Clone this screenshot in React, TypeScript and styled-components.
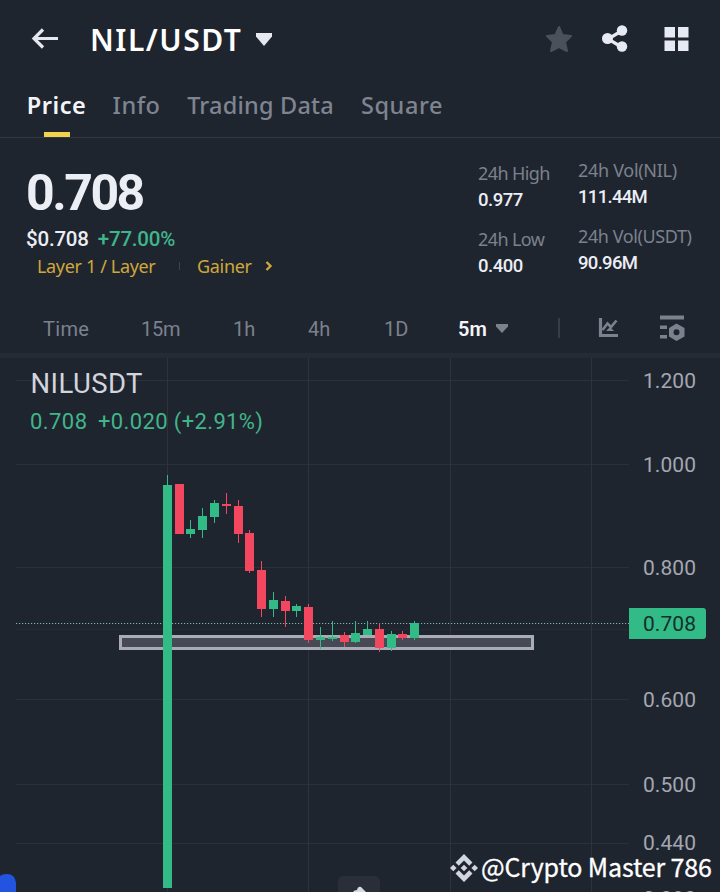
import React from "react";
import styled, { createGlobalStyle } from "styled-components";

const PageStyle = createGlobalStyle`
  * { box-sizing: border-box; }
  body { margin: 0; background: #1f252f; }
`;

const Screen = styled.main`
  width: 720px;
  height: 892px;
  display: flex;
  flex-direction: column;
  overflow: hidden;
  background: #1f252f;
  color: #eceef5;
  font-family: "Noto Sans", "Open Sans", sans-serif;
`;

const Header = styled.header`
  height: 78px;
  display: flex;
  align-items: center;
  padding: 0 31px;
`;

const Pair = styled.h1`
  margin: 2px 14px 0 31px;
  width: 152px;
  font-size: 30px;
  line-height: 40px;
  font-weight: 600;
  letter-spacing: 1.5px;
  color: #fff;
  white-space: nowrap;
`;

const Actions = styled.div`
  margin-left: auto;
  display: flex;
  align-items: center;
  gap: 28px;
`;

const GridButton = styled.span`
  display: flex;
  margin-left: 7px;
`;

const Tabs = styled.nav`
  height: 60px;
  display: flex;
  gap: 27px;
  padding-left: 27px;
  border-bottom: 1px solid #323843;
`;

const Tab = styled.div<{ $width: number; $active?: boolean; $spacing?: number }>`
  width: ${(p) => p.$width}px;
  display: flex;
  flex-direction: column;
  align-items: center;
  justify-content: space-between;
  padding-top: 10px;
  font-size: 23.5px;
  line-height: 34px;
  font-weight: ${(p) => (p.$active ? 600 : 500)};
  letter-spacing: ${(p) => p.$spacing ?? 0}px;
  color: ${(p) => (p.$active ? "#f3f4f8" : "#7e8490")};
  white-space: nowrap;
`;

const TabMark = styled.span`
  width: 26px;
  height: 5px;
  background: #f2d34f;
`;

const Summary = styled.section`
  height: 165px;
  display: flex;
`;

const PriceBlock = styled.div`
  width: 478px;
  padding: 28px 0 0 26px;
`;

const LastPrice = styled.div`
  font: 700 50px/54px Roboto, sans-serif;
  letter-spacing: -2.5px;
`;

const ChangeRow = styled.div`
  display: flex;
  gap: 9px;
  margin-top: 5px;
  font: 500 20.5px/28px Roboto, sans-serif;
  letter-spacing: -0.2px;
`;

const Gain = styled.span`
  color: #3fb68a;
`;

const TagRow = styled.div`
  display: flex;
  align-items: center;
  padding-left: 11px;
  height: 25px;
  font-size: 18px;
  color: #cfa83b;
  white-space: nowrap;
`;

const Tag = styled.span<{ $width: number; $spacing: number }>`
  width: ${(p) => p.$width}px;
  letter-spacing: ${(p) => p.$spacing}px;
`;

const TagDivider = styled.span`
  width: 1px;
  height: 8px;
  margin: 0 17px 0 23px;
  background: #3d424c;
`;

const StatColumn = styled.div<{ $width: number; $top: number }>`
  width: ${(p) => p.$width}px;
  padding-top: ${(p) => p.$top}px;
  display: flex;
  flex-direction: column;
  gap: 14px;
`;

const Stat = styled.div`
  height: 52px;
`;

const StatLabel = styled.div<{ $spacing?: number }>`
  font-size: 18px;
  line-height: 26px;
  letter-spacing: ${(p) => p.$spacing ?? -0.4}px;
  color: #7b818d;
  white-space: nowrap;
`;

const StatValue = styled.div<{ $spacing?: number }>`
  font: 500 18.5px/28px Roboto, sans-serif;
  letter-spacing: ${(p) => p.$spacing ?? -0.5}px;
`;

const Intervals = styled.nav`
  height: 50px;
  display: flex;
  align-items: center;
  padding-left: 43px;
  font: 400 20px/28px Roboto, sans-serif;
  color: #7b818d;
`;

const Interval = styled.span<{ $slot: number; $active?: boolean; $spacing?: number }>`
  width: ${(p) => p.$slot}px;
  padding-top: 1px;
  letter-spacing: ${(p) => p.$spacing ?? 0}px;
  font-weight: ${(p) => (p.$active ? 600 : 400)};
  color: ${(p) => (p.$active ? "#f3f4f8" : "inherit")};
`;

const IntervalDivider = styled.span`
  width: 2px;
  height: 20px;
  margin: 0 38px 0 50px;
  background: #383d48;
`;

const ToolGap = styled.span`
  width: 42px;
`;

const ChartArea = styled.section`
  height: 539px;
  border-top: 5px solid #252a34;
`;

const ChartSvg = styled.svg`
  display: block;
  font-family: Roboto, sans-serif;
`;

const GREEN = "#33bb87";
const RED = "#f2475f";

type Candle = [left: number, open: number, close: number, high: number, low: number, color: string];

const candles: Candle[] = [
  [163, 485, 888, 475, 888, GREEN],
  [175, 484, 534, 484, 534, RED],
  [186, 529, 534, 520, 538, GREEN],
  [198, 516, 530, 508, 538, GREEN],
  [210, 503, 517, 500, 523, GREEN],
  [222, 504, 506, 493, 514, RED],
  [234, 506, 534, 500, 543, RED],
  [245, 533, 571, 530, 573, RED],
  [257, 570, 609, 561, 617, RED],
  [269, 600, 609, 592, 617, GREEN],
  [281, 601, 611, 596, 627, RED],
  [292, 606, 611, 604, 617, GREEN],
  [304, 607, 640, 604, 643, RED],
  [316, 637, 640, 627, 649, GREEN],
  [328, 637, 639, 621, 641, GREEN],
  [340, 635, 642, 632, 647, RED],
  [351, 633, 642, 621, 643, GREEN],
  [363, 629, 635, 621, 635, GREEN],
  [375, 629, 648, 623, 652, RED],
  [387, 634, 648, 631, 651, GREEN],
  [398, 634, 638, 631, 640, RED],
  [410, 623, 638, 621, 640, GREEN],
];

const priceLevels: [string, number][] = [
  ["1.200", 380],
  ["1.000", 464],
  ["0.800", 567],
  ["0.600", 699],
  ["0.500", 784],
  ["0.440", 843],
  ["0.390", 898],
];

const timeLines = [167, 308, 450, 591];

function PriceChart() {
  return (
    <ChartSvg width="720" height="534" viewBox="0 358 720 534">
      {priceLevels.map(([label, y]) => (
        <rect key={label} x="16" y={y} width="613" height="1" fill="#2a303a" />
      ))}
      <rect x="16" y="629" width="613" height="1" fill="#252b35" />
      {timeLines.map((x) => (
        <rect key={x} x={x} y="358" width="1" height="534" fill="#2d323c" />
      ))}
      <rect x="120.5" y="636.5" width="412" height="12" fill="#474a54" stroke="#a9acb7" strokeWidth="3" />
      <line x1="16" x2="629" y1="623.5" y2="623.5" stroke="#7fb5a6" strokeDasharray="1.200 1.800" />
      {candles.map(([x, top, bottom, high, low, color]) => (
        <g key={x} fill={color}>
          <rect x={x + 4} y={high} width="1" height={low - high} />
          <rect x={x} y={top} width="9" height={bottom - top} />
        </g>
      ))}
      <text x="30.5" y="393" fontSize="27.5" fill="#d3d5dd" textLength="112">NILUSDT</text>
      <g fontSize="22" fill="#3fb68a">
        <text x="30" y="429" textLength="57">0.708</text>
        <text x="98" y="429" textLength="165">+0.020 (+2.91%)</text>
      </g>
      <g fontSize="21" fill="#a4a7b1">
        {priceLevels.map(([label, y]) => (
          <text key={label} x="643" y={y === 843 ? 850 : y + 8} textLength="53">{label}</text>
        ))}
      </g>
      <path d="M629 608h74a3 3 0 0 1 3 3v25a3 3 0 0 1-3 3h-74z" fill={GREEN} />
      <text x="643" y="631" fontSize="21" fill="#152f2b" textLength="53">0.708</text>

      <path d="M0 876q2-2 7-2 8 0 9 9v9H0z" fill="#2254e0" />
      <rect x="338" y="876" width="42" height="24" rx="5" fill="#292e38" />
      <path d="M353 892q1-2 4-2 1-4 4-3l5 5z" fill="#d8dae3" />

      <g transform="translate(464 868)" fill="#d3d6e0">
        <path d="M0-14 8.500-5.500 5.200-2.200 0-7.400-5.200-2.200-8.500-5.500z" />
        <path d="M0 14 8.500 5.500 5.200 2.200 0 7.400-5.200 2.200-8.500 5.500z" />
        <path d="M0-3.300 3.300 0 0 3.300-3.300 0z" />
        <path d="M-10.700-3.300-7.400 0-10.700 3.300-14 0z" />
        <path d="M10.700-3.300 14 0 10.700 3.300 7.400 0z" />
      </g>
      <text
        x="481"
        y="877"
        fontFamily='"Noto Sans CJK SC", sans-serif'
        fontSize="25"
        fontWeight="400"
        fill="#fff"
        stroke="#fff"
        strokeWidth="0.300"
        textLength="231"
      >
        @Crypto Master 786
      </text>
    </ChartSvg>
  );
}

function BackIcon() {
  return (
    <svg width="28" height="22" viewBox="0 0 28 22" fill="none" stroke="#e6e8ef" strokeWidth="3.200">
      <path d="M27 10.500H3M12 1.500l-9 9 9 9" />
    </svg>
  );
}

function CaretIcon({ width, height, color }: { width: number; height: number; color: string }) {
  return (
    <svg width={width} height={height} viewBox="0 0 16 13" preserveAspectRatio="none" fill={color}>
      <path d="M0 0h16v3.500L8 13 0 3.500z" />
    </svg>
  );
}

function StarIcon() {
  return (
    <svg width="28" height="28" viewBox="0 0 28 28" fill="#4b505b" stroke="#4b505b" strokeWidth="2" strokeLinejoin="round">
      <path d="m14 2 3.500 8 8.500 1-6 6 2 9-8-4-8 4 2-9-6-6 8.500-1z" />
    </svg>
  );
}

function ShareIcon() {
  return (
    <svg width="28" height="28" viewBox="0 0 28 28" fill="#e8eaf3" stroke="#e8eaf3">
      <path d="M20.500 6 7 14l13.500 8" fill="none" strokeWidth="3.200" />
      <circle cx="21" cy="5.500" r="5.200" stroke="none" />
      <circle cx="6.500" cy="13.500" r="5.500" stroke="none" />
      <circle cx="21" cy="21.500" r="5.200" stroke="none" />
    </svg>
  );
}

function GridIcon() {
  return (
    <svg width="25" height="25" viewBox="0 0 25 25" fill="#e8eaf3">
      <path d="M0.500 0H11v10.500H0.500zM14 0h10.500v10.500H14zM0.500 13.500H11V24H0.500zM14 13.500h10.500V24H14z" />
    </svg>
  );
}

function ChevronIcon() {
  return (
    <svg width="8" height="10" viewBox="0 0 8 10" fill="none" stroke="#cfa83b" strokeWidth="2.400">
      <path d="m1.500 1 4 4-4 4" />
    </svg>
  );
}

function LineChartIcon() {
  return (
    <svg width="20" height="20" viewBox="0 0 20 20" fill="none" stroke="#7b818d">
      <path d="M2.500 0v17.500H20" strokeWidth="3.200" />
      <path d="m4.500 12 5-6.500 3.500 3.500 5.500-6.500" strokeWidth="2.600" />
      <path d="m8 13 4-4 4 4z" fill="#7b818d" stroke="none" />
    </svg>
  );
}

function IndicatorIcon() {
  return (
    <svg width="26" height="27" viewBox="0 0 26 27" fill="#7b818d">
      <path d="M0 0.500h24v4H0zM0 10.500h7V14H0zM0 20h7v3.500H0z" />
      <path fillRule="evenodd" d="m16.500 8.500 8 4.500v8.500l-8 4.500-7.500-4.500V13zM16.500 14.200a3 3 0 1 0 0 6 3 3 0 0 0 0-6z" />
    </svg>
  );
}

export default function App() {
  return (
    <Screen>
      <PageStyle />
      <Header>
        <BackIcon />
        <Pair>NIL/USDT</Pair>
        <CaretIcon width={16} height={13} color="#e6e8ef" />
        <Actions>
          <StarIcon />
          <ShareIcon />
          <GridButton>
            <GridIcon />
          </GridButton>
        </Actions>
      </Header>

      <Tabs>
        <Tab $width={59} $active $spacing={0.5}>
          Price
          <TabMark />
        </Tab>
        <Tab $width={47} $spacing={0.5}>Info</Tab>
        <Tab $width={147} $spacing={0.2}>Trading Data</Tab>
        <Tab $width={82} $spacing={0.6}>Square</Tab>
      </Tabs>

      <Summary>
        <PriceBlock>
          <LastPrice>0.708</LastPrice>
          <ChangeRow>
            <span>$0.708</span>
            <Gain>+77.00%</Gain>
          </ChangeRow>
          <TagRow>
            <Tag $width={119} $spacing={-0.35}>Layer 1 / Layer</Tag>
            <TagDivider />
            <Tag $width={68} $spacing={-0.3}>Gainer</Tag>
            <ChevronIcon />
          </TagRow>
        </PriceBlock>
        <StatColumn $width={100} $top={22}>
          <Stat>
            <StatLabel $spacing={-0.6}>24h High</StatLabel>
            <StatValue>0.977</StatValue>
          </Stat>
          <Stat>
            <StatLabel $spacing={-0.6}>24h Low</StatLabel>
            <StatValue>0.400</StatValue>
          </Stat>
        </StatColumn>
        <StatColumn $width={140} $top={19}>
          <Stat>
            <StatLabel $spacing={-0.3}>24h Vol(NIL)</StatLabel>
            <StatValue $spacing={-0.7}>111.44M</StatValue>
          </Stat>
          <Stat>
            <StatLabel>24h Vol(USDT)</StatLabel>
            <StatValue $spacing={-0.7}>90.96M</StatValue>
          </Stat>
        </StatColumn>
      </Summary>

      <Intervals>
        <Interval $slot={98} $spacing={0.3}>Time</Interval>
        <Interval $slot={92} $spacing={-0.3}>15m</Interval>
        <Interval $slot={75}>1h</Interval>
        <Interval $slot={76}>4h</Interval>
        <Interval $slot={74}>1D</Interval>
        <Interval $slot={38} $active>5m</Interval>
        <CaretIcon width={12} height={9} color="#7b818d" />
        <IntervalDivider />
        <LineChartIcon />
        <ToolGap />
        <IndicatorIcon />
      </Intervals>

      <ChartArea>
        <PriceChart />
      </ChartArea>
    </Screen>
  );
}
